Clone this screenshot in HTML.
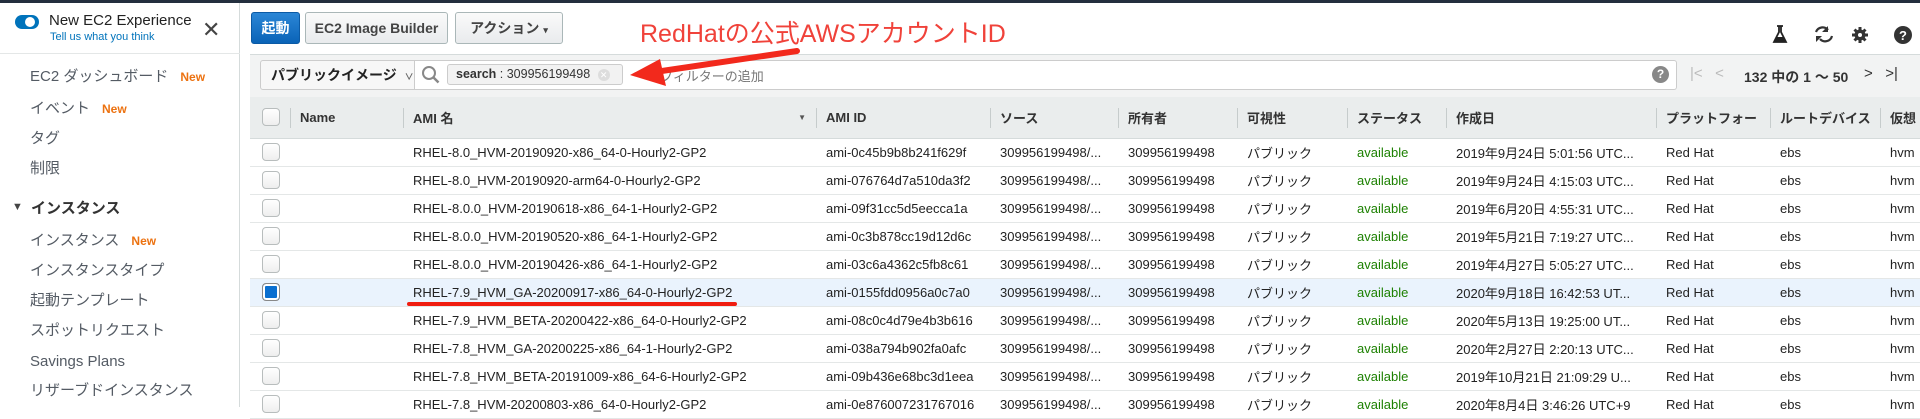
<!DOCTYPE html>
<html><head><meta charset="utf-8">
<style>
*{box-sizing:border-box;margin:0;padding:0}
body{width:1920px;height:407px;overflow:hidden;background:#fff;font-family:"Liberation Sans","Noto Sans CJK JP",sans-serif;color:#16191f;position:relative}
.abs{position:absolute}
.topbar{left:0;top:0;width:1920px;height:3px;background:#232f3e}
.side{left:0;top:3px;width:240px;height:404px;border-right:1px solid #d5dbdb;background:#fff}
.sitem{position:absolute;left:30px;font-size:15px;color:#545b64;white-space:nowrap}
.new{color:#ec7211;font-size:12px;font-weight:bold;margin-left:12px}
.btn{position:absolute;top:12px;height:32px;border:1px solid #aab7b8;border-radius:3px;background:linear-gradient(#fafafa,#e9ebed);font-size:14px;font-weight:bold;color:#444;line-height:30px;text-align:center}
.fbar{left:250px;top:54px;width:1670px;height:43px;background:#f2f3f3;border-top:1px solid #d5dbdb}
table{position:absolute;left:250px;top:97px;border-collapse:collapse;table-layout:fixed;width:1750px;font-size:13px}
th{height:41px;background:#eaeded;text-align:left;font-weight:bold;color:#333;padding-left:10px;position:relative;border-bottom:1px solid #d5dbdb;white-space:nowrap;overflow:hidden}
th.s::before{content:"";position:absolute;left:0;top:11px;height:20px;border-left:1px solid #c6cccc}
td{height:28px;border-bottom:1px solid #e4e7e7;padding-left:10px;white-space:nowrap;overflow:hidden;color:#222}
tr.sel td{background:#eaf3fd}
.cb{display:inline-block;width:18px;height:18px;border:1px solid #b8bdbd;border-radius:4px;background:linear-gradient(#fff,#eee);vertical-align:middle}
.cbs{background:#0a6fd0;border-color:#888;box-shadow:inset 0 0 0 2px #fff}
.av{color:#1d8102}
td.c0,th.c0{padding-left:12px}
</style></head><body>
<div class="abs topbar"></div>
<div class="abs side">
  <div class="abs" style="left:15px;top:12px;width:24px;height:14px;border-radius:7px;background:#0073bb"></div>
  <div class="abs" style="left:25px;top:14px;width:10px;height:10px;border-radius:5px;background:#fff"></div>
  <div class="abs" style="left:49px;top:9px;font-size:15px;color:#222">New EC2 Experience</div>
  <div class="abs" style="left:50px;top:28px;font-size:11px;color:#0073bb">Tell us what you think</div>
  <div class="abs" style="left:202px;top:14px;font-size:22px;color:#444;font-weight:300">✕</div>
  <div class="abs" style="left:0;top:50px;width:240px;border-top:1px solid #e4e7e7"></div>
  <div class="sitem" style="top:62px">EC2 ダッシュボード<span class="new">New</span></div>
  <div class="sitem" style="top:94px">イベント<span class="new">New</span></div>
  <div class="sitem" style="top:124px">タグ</div>
  <div class="sitem" style="top:154px">制限</div>
  <div class="sitem" style="left:12px;top:198px;font-size:11px;color:#444">▼</div>
  <div class="sitem" style="left:31px;top:194px;font-weight:bold;color:#333">インスタンス</div>
  <div class="sitem" style="top:226px">インスタンス<span class="new">New</span></div>
  <div class="sitem" style="top:256px">インスタンスタイプ</div>
  <div class="sitem" style="top:286px">起動テンプレート</div>
  <div class="sitem" style="top:316px">スポットリクエスト</div>
  <div class="sitem" style="top:350px">Savings Plans</div>
  <div class="sitem" style="top:376px">リザーブドインスタンス</div>
</div>

<div class="btn" style="left:251px;width:49px;background:linear-gradient(#2b86d6,#0a63b7);border-color:#0b5aa5;color:#fff">起動</div>
<div class="btn" style="left:305px;width:143px">EC2 Image Builder</div>
<div class="btn" style="left:455px;width:108px">アクション <span style="font-size:9px">▾</span></div>

<div class="abs" style="left:640px;top:14px;font-size:25px;color:#f0423a;white-space:nowrap">RedHatの公式AWSアカウントID</div>

<svg class="abs" style="left:1770px;top:24px" width="150" height="22">
  <path d="M7 2h6M9 2v6l-5 10h12l-5-10V2" fill="none" stroke="#222" stroke-width="1.8"/><path d="M6 13h8l2 5H4z" fill="#222"/>
  <path d="M46 8a7 7 0 0 1 12 -2M62 12a7 7 0 0 1 -12 3" fill="none" stroke="#333" stroke-width="2.2"/><path d="M58 2v6h-6zM46 18v-6h6z" fill="#333"/>
  <circle cx="90" cy="11" r="5.5" fill="#333"/>
  <path d="M90 3v16M82 11h16M84.5 5.5l11 11M95.5 5.5l-11 11" stroke="#333" stroke-width="3"/><circle cx="90" cy="11" r="2" fill="#fff"/>
  <circle cx="133" cy="11" r="9" fill="#333"/><text x="133" y="16" text-anchor="middle" font-size="13" font-weight="bold" fill="#fff" font-family="Liberation Sans">?</text>
</svg>

<div class="abs fbar"></div>
<div class="abs" style="left:260px;top:60px;width:155px;height:30px;border:1px solid #ccc;border-radius:3px 0 0 3px;background:#f7f7f7;font-size:14px;font-weight:bold;line-height:28px;padding-left:10px;color:#222">パブリックイメージ <span style="font-size:9px;color:#666;margin-left:4px">∨</span></div>
<div class="abs" style="left:415px;top:60px;width:1262px;height:30px;border:1px solid #ccc;border-left:none;background:#fff;border-radius:0 3px 3px 0"></div>
<svg class="abs" style="left:421px;top:65px" width="20" height="20"><circle cx="8" cy="8" r="6" fill="none" stroke="#888" stroke-width="2"/><path d="M12.5 12.5l5 5" stroke="#888" stroke-width="2.5"/></svg>
<div class="abs" style="left:447px;top:64px;width:176px;height:21px;border:1px solid #ccc;border-radius:3px;background:#f2f2f2;font-size:12.5px;line-height:19px;padding-left:8px;color:#333;white-space:nowrap"><b>search</b> : 309956199498 <span style="display:inline-block;width:12px;height:12px;border-radius:6px;background:#ddd;color:#fff;font-size:9px;line-height:12px;text-align:center;margin-left:4px">✕</span></div>
<div class="abs" style="left:660px;top:66px;font-size:13px;color:#777">フィルターの追加</div>
<div class="abs" style="left:1652px;top:66px;width:17px;height:17px;border-radius:9px;background:#888;color:#fff;font-size:12px;font-weight:bold;text-align:center;line-height:17px">?</div>
<div class="abs" style="left:1690px;top:65px;font-size:15px;color:#bbb">|&lt;&nbsp;&nbsp;&nbsp;&lt;</div>
<div class="abs" style="left:1744px;top:67px;font-size:14px;font-weight:bold;color:#333;white-space:nowrap">132 中の 1 〜 50</div>
<div class="abs" style="left:1864px;top:65px;font-size:15px;color:#333;white-space:nowrap">&gt;&nbsp;&nbsp;&nbsp;&gt;|</div>

<table>
<colgroup><col style="width:40px"><col style="width:113px"><col style="width:413px"><col style="width:174px"><col style="width:128px"><col style="width:119px"><col style="width:110px"><col style="width:99px"><col style="width:210px"><col style="width:114px"><col style="width:110px"><col style="width:120px"></colgroup>
<tr><th class="c0"><span class="cb"></span></th><th class="s">Name</th><th class="s">AMI 名<span style="position:absolute;right:10px;font-size:8px;color:#555;top:16px">▼</span></th><th class="s">AMI ID</th><th class="s">ソース</th><th class="s">所有者</th><th class="s">可視性</th><th class="s">ステータス</th><th class="s">作成日</th><th class="s">プラットフォー</th><th class="s">ルートデバイス</th><th class="s">仮想</th></tr>
<tr><td class="c0"><span class="cb"></span></td><td></td><td>RHEL-8.0_HVM-20190920-x86_64-0-Hourly2-GP2</td><td>ami-0c45b9b8b241f629f</td><td>309956199498/...</td><td>309956199498</td><td>パブリック</td><td class="av">available</td><td>2019年9月24日 5:01:56 UTC...</td><td>Red Hat</td><td>ebs</td><td>hvm</td></tr>
<tr><td class="c0"><span class="cb"></span></td><td></td><td>RHEL-8.0_HVM-20190920-arm64-0-Hourly2-GP2</td><td>ami-076764d7a510da3f2</td><td>309956199498/...</td><td>309956199498</td><td>パブリック</td><td class="av">available</td><td>2019年9月24日 4:15:03 UTC...</td><td>Red Hat</td><td>ebs</td><td>hvm</td></tr>
<tr><td class="c0"><span class="cb"></span></td><td></td><td>RHEL-8.0.0_HVM-20190618-x86_64-1-Hourly2-GP2</td><td>ami-09f31cc5d5eecca1a</td><td>309956199498/...</td><td>309956199498</td><td>パブリック</td><td class="av">available</td><td>2019年6月20日 4:55:31 UTC...</td><td>Red Hat</td><td>ebs</td><td>hvm</td></tr>
<tr><td class="c0"><span class="cb"></span></td><td></td><td>RHEL-8.0.0_HVM-20190520-x86_64-1-Hourly2-GP2</td><td>ami-0c3b878cc19d12d6c</td><td>309956199498/...</td><td>309956199498</td><td>パブリック</td><td class="av">available</td><td>2019年5月21日 7:19:27 UTC...</td><td>Red Hat</td><td>ebs</td><td>hvm</td></tr>
<tr><td class="c0"><span class="cb"></span></td><td></td><td>RHEL-8.0.0_HVM-20190426-x86_64-1-Hourly2-GP2</td><td>ami-03c6a4362c5fb8c61</td><td>309956199498/...</td><td>309956199498</td><td>パブリック</td><td class="av">available</td><td>2019年4月27日 5:05:27 UTC...</td><td>Red Hat</td><td>ebs</td><td>hvm</td></tr>
<tr class="sel"><td class="c0"><span class="cb cbs"></span></td><td></td><td>RHEL-7.9_HVM_GA-20200917-x86_64-0-Hourly2-GP2</td><td>ami-0155fdd0956a0c7a0</td><td>309956199498/...</td><td>309956199498</td><td>パブリック</td><td class="av">available</td><td>2020年9月18日 16:42:53 UT...</td><td>Red Hat</td><td>ebs</td><td>hvm</td></tr>
<tr><td class="c0"><span class="cb"></span></td><td></td><td>RHEL-7.9_HVM_BETA-20200422-x86_64-0-Hourly2-GP2</td><td>ami-08c0c4d79e4b3b616</td><td>309956199498/...</td><td>309956199498</td><td>パブリック</td><td class="av">available</td><td>2020年5月13日 19:25:00 UT...</td><td>Red Hat</td><td>ebs</td><td>hvm</td></tr>
<tr><td class="c0"><span class="cb"></span></td><td></td><td>RHEL-7.8_HVM_GA-20200225-x86_64-1-Hourly2-GP2</td><td>ami-038a794b902fa0afc</td><td>309956199498/...</td><td>309956199498</td><td>パブリック</td><td class="av">available</td><td>2020年2月27日 2:20:13 UTC...</td><td>Red Hat</td><td>ebs</td><td>hvm</td></tr>
<tr><td class="c0"><span class="cb"></span></td><td></td><td>RHEL-7.8_HVM_BETA-20191009-x86_64-6-Hourly2-GP2</td><td>ami-09b436e68bc3d1eea</td><td>309956199498/...</td><td>309956199498</td><td>パブリック</td><td class="av">available</td><td>2019年10月21日 21:09:29 U...</td><td>Red Hat</td><td>ebs</td><td>hvm</td></tr>
<tr><td class="c0"><span class="cb"></span></td><td></td><td>RHEL-7.8_HVM-20200803-x86_64-0-Hourly2-GP2</td><td>ami-0e876007231767016</td><td>309956199498/...</td><td>309956199498</td><td>パブリック</td><td class="av">available</td><td>2020年8月4日 3:46:26 UTC+9</td><td>Red Hat</td><td>ebs</td><td>hvm</td></tr>
</table>

<div class="abs" style="left:407px;top:302px;width:330px;height:4px;background:#f01d10;border-radius:2px"></div>
<svg class="abs" style="left:620px;top:45px" width="190" height="45">
  <path d="M177 6L35 27" stroke="#f2291c" stroke-width="6" stroke-linecap="round"/>
  <path d="M10 30L40 14L46 41z" fill="#f2291c"/>
</svg>
</body></html>
